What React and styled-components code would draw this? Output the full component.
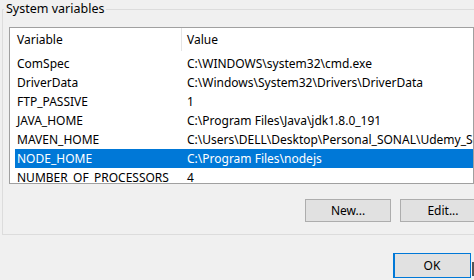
import styled, { createGlobalStyle } from "styled-components";

const GlobalStyle = createGlobalStyle`
  body {
    margin: 0;
    background: #f0f0f0;
    font-family: "Noto Sans", "Open Sans", sans-serif;
    font-size: 12px;
    color: #000;
  }
`;

const variables = [
  { name: "ComSpec", value: "C:\\WINDOWS\\system32\\cmd.exe" },
  { name: "DriverData", value: "C:\\Windows\\System32\\Drivers\\DriverData" },
  { name: "FTP_PASSIVE", value: "1" },
  { name: "JAVA_HOME", value: "C:\\Program Files\\Java\\jdk1.8.0_191" },
  {
    name: "MAVEN_HOME",
    value: "C:\\Users\\DELL\\Desktop\\Personal_SONAL\\Udemy_Selenium\\apache-maven-3.6.0",
  },
  { name: "NODE_HOME", value: "C:\\Program Files\\nodejs" },
  { name: "NUMBER_OF_PROCESSORS", value: "4" },
];

export default function App() {
  const selected = "NODE_HOME";

  return (
    <>
      <GlobalStyle />
      <Page>
        <GroupBox>
          <Legend>System variables</Legend>
          <ListView>
            <Header>
              <HeaderCell $width="164px" $divider>
                Variable
              </HeaderCell>
              <HeaderCell>Value</HeaderCell>
            </Header>
            {variables.map((v) => (
              <Row key={v.name} $selected={v.name === selected}>
                <Cell>{v.name}</Cell>
                <Cell>{v.value}</Cell>
              </Row>
            ))}
          </ListView>
          <ButtonRow>
            <Button>New...</Button>
            <Button>Edit...</Button>
          </ButtonRow>
        </GroupBox>
        <Footer>
          <Button $default $width="78px" $height="25px">
            OK
          </Button>
          <ClippedButton />
        </Footer>
      </Page>
    </>
  );
}

const Page = styled.div`
  width: 474px;
  height: 280px;
  overflow: hidden;
`;

const GroupBox = styled.fieldset`
  margin: 0 0 0 2px;
  padding: 0 15px 12px 0;
  width: 483px;
  border: 1px solid #dcdcdc;
  min-width: 0;
`;

const Legend = styled.legend`
  margin-left: 1px;
  padding: 0 2px;
  line-height: 18px;
  font-size: 12.5px;
`;

const ListView = styled.div`
  margin: 9px 0 0 6px;
  width: 463px;
  height: 155px;
  border: 1px solid #a0a0a0;
  background: #fff;
  overflow: hidden;
`;

const Header = styled.div`
  display: flex;
  height: 26px;
  padding-left: 7px;
  align-items: stretch;
`;

const HeaderCell = styled.div`
  display: flex;
  align-items: center;
  width: ${(p) => p.$width || "auto"};
  padding-left: ${(p) => (p.$divider ? "0" : "5px")};
  border-right: ${(p) => (p.$divider ? "1px solid #e5e5e5" : "none")};
  margin-bottom: 3px;
`;

const Row = styled.div`
  display: grid;
  grid-template-columns: 170px 1fr;
  height: 19px;
  margin-left: 5px;
  align-items: center;
  white-space: nowrap;
  background: ${(p) => (p.$selected ? "#0078d7" : "transparent")};
  color: ${(p) => (p.$selected ? "#fff" : "#000")};
`;

const Cell = styled.div`
  padding-left: 2px;
  overflow: hidden;
`;

const ButtonRow = styled.div`
  display: flex;
  justify-content: flex-end;
  gap: 9px;
  margin-top: 15px;
`;

const Button = styled.button`
  width: ${(p) => p.$width || "86px"};
  height: ${(p) => p.$height || "23px"};
  padding: 0;
  font-family: inherit;
  font-size: 12px;
  color: #000;
  background: #e1e1e1;
  border: 1px solid ${(p) => (p.$default ? "#0078d7" : "#adadad")};
  box-shadow: ${(p) => (p.$default ? "inset 1px 0 0 #0078d7" : "none")};
`;

const Footer = styled.div`
  display: flex;
  justify-content: flex-end;
  align-items: flex-start;
  gap: 1px;
  margin-top: 18px;
`;

const ClippedButton = styled.div`
  flex: none;
  width: 2px;
  height: 14px;
  margin-top: 9px;
  background: #555;
`;
